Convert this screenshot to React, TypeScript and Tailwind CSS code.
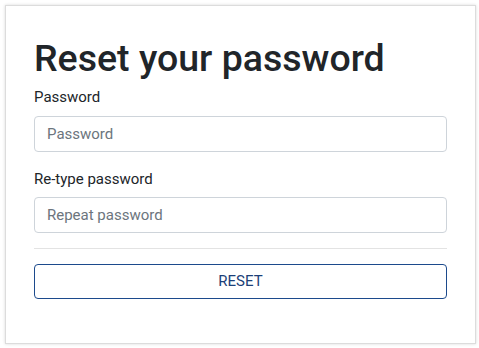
export default function App() {
  return (
    <div className="min-h-screen bg-white p-[5px] font-['Roboto',sans-serif]">
      <div className="border border-[#dcdcdc] bg-white shadow-[0_0_3px_rgba(0,0,0,0.15)] px-[28px] pt-[30px] h-[339px] w-[471px]">
        <h1 className="text-[37.5px] leading-[44px] font-medium text-[#212529]">Reset your password</h1>
        <form className="flex flex-col" onSubmit={(e) => e.preventDefault()}>
          <label className="text-[15px] leading-[20px] text-[#212529] mt-[7px] mb-[9px]">Password</label>
          <input
            type="password"
            placeholder="Password"
            className="h-[36px] w-full rounded-[4px] border border-[#ced4da] px-[12px] text-[15px] text-[#495057] placeholder:text-[#6c757d] outline-none"
          />
          <label className="text-[15px] leading-[20px] text-[#212529] mt-[17px] mb-[8px]">Re-type password</label>
          <input
            type="password"
            placeholder="Repeat password"
            className="h-[36px] w-full rounded-[4px] border border-[#ced4da] px-[12px] text-[15px] text-[#495057] placeholder:text-[#6c757d] outline-none"
          />
          <hr className="mt-[15px] mb-[15px] border-t border-[#e3e3e3]" />
          <button
            type="submit"
            className="h-[35px] w-full rounded-[4px] border-[1.5px] border-[#1c4a8c] bg-white text-[15px] text-[#1c3f78]"
          >
            RESET
          </button>
        </form>
      </div>
    </div>
  );
}
